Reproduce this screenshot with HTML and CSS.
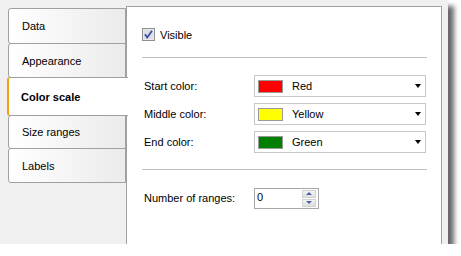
FILE: index.html
```html
<!DOCTYPE html>
<html>
<head>
<meta charset="utf-8">
<link rel="stylesheet" href="styles.css">
</head>
<body>
<div class="window">
  <div class="tabs">
    <div class="tab">Data</div>
    <div class="tab">Appearance</div>
    <div class="tab active">Color scale</div>
    <div class="tab">Size ranges</div>
    <div class="tab">Labels</div>
  </div>
  <div class="panel">
    <label class="check-row">
      <span class="checkbox">
        <svg width="13" height="13" viewBox="0 0 13 13">
          <rect x="0.5" y="0.5" width="12" height="12" fill="#f4f4f4" stroke="#8e8f8f"/>
          <rect x="1.5" y="1.5" width="10" height="10" fill="#dcdee2"/>
          <path d="M3 6.2 L5.2 9.5 L10 2.8" fill="none" stroke="#3b4fa8" stroke-width="1.8"/>
        </svg>
      </span>
      <span>Visible</span>
    </label>
    <div class="sep"></div>
    <div class="rows">
      <div class="row">
        <span class="lbl">Start color:</span>
        <div class="combo">
          <span class="swatch red"></span>
          <span class="ctext">Red</span>
          <span class="arrow"></span>
        </div>
      </div>
      <div class="row">
        <span class="lbl">Middle color:</span>
        <div class="combo">
          <span class="swatch yellow"></span>
          <span class="ctext">Yellow</span>
          <span class="arrow"></span>
        </div>
      </div>
      <div class="row">
        <span class="lbl">End color:</span>
        <div class="combo">
          <span class="swatch green"></span>
          <span class="ctext">Green</span>
          <span class="arrow"></span>
        </div>
      </div>
    </div>
    <div class="sep sep2"></div>
    <div class="row">
      <span class="lbl">Number of ranges:</span>
      <div class="spin">
        <span class="spin-val">0</span>
        <span class="spin-btns">
          <span class="sbtn"><span class="up"></span></span>
          <span class="sbtn"><span class="down"></span></span>
        </span>
      </div>
    </div>
  </div>
</div>
</body>
</html>
```
FILE: styles.css
```css
html, body {
  margin: 0;
  padding: 0;
  background: #ffffff;
}
body {
  font-family: "Liberation Sans", Arial, sans-serif;
  font-size: 11px;
  color: #000;
}
.window {
  width: 448px;
  height: 244px;
  background: #f0f0f0;
  display: flex;
  box-shadow: 6px 6px 5px rgba(0, 0, 0, 0.6);
}
.tabs {
  width: 118px;
  padding: 8px 0 0 8px;
  display: flex;
  flex-direction: column;
}
.tab {
  box-sizing: border-box;
  height: 35px;
  margin-top: -1px;
  border: 1px solid #a0a0a0;
  border-radius: 3px 0 0 3px;
  background: linear-gradient(to right, #ffffff, #ebebeb);
  display: flex;
  align-items: center;
  padding-left: 13px;
}
.tab:first-child {
  margin-top: 0;
  height: 36px;
}
.tab.active {
  position: relative;
  z-index: 2;
  height: 39px;
  margin-left: -1px;
  margin-right: -2px;
  border-left: 2px solid #f2a10d;
  border-right: none;
  background: #ffffff;
  font-weight: bold;
  padding-left: 12px;
}
.tab.active + .tab {
  height: 34px;
}
.panel {
  box-sizing: border-box;
  width: 316px;
  height: 238px;
  margin-top: 6px;
  background: #ffffff;
  border: 1px solid #a0a0a0;
  border-bottom: none;
  padding: 21px 14px 0 15px;
}
.check-row {
  display: flex;
  align-items: center;
  gap: 5px;
  height: 13px;
}
.checkbox {
  display: block;
  width: 13px;
  height: 13px;
}
.checkbox svg {
  display: block;
}
.sep {
  height: 1px;
  background: #c0c0c0;
  margin-top: 16px;
}
.rows {
  display: flex;
  flex-direction: column;
  gap: 6px;
  margin-top: 17px;
}
.sep2 {
  margin-top: 16px;
  margin-bottom: 17px;
}
.row {
  display: flex;
  align-items: center;
  height: 22px;
}
.lbl {
  width: 110px;
  padding-left: 2px;
}
.combo {
  box-sizing: border-box;
  width: 172px;
  height: 22px;
  border: 1px solid #c8c8c8;
  display: flex;
  align-items: center;
  padding-left: 3px;
}
.swatch {
  box-sizing: border-box;
  width: 25px;
  height: 13px;
  border: 1px solid #9a9a9a;
}
.red { background: #ff0000; }
.yellow { background: #ffff00; }
.green { background: #008000; }
.ctext {
  flex: 1;
  padding-left: 9px;
}
.arrow {
  width: 0;
  height: 0;
  border-left: 3.5px solid transparent;
  border-right: 3.5px solid transparent;
  border-top: 4px solid #000;
  margin-right: 4px;
}
.spin {
  box-sizing: border-box;
  width: 65px;
  height: 21px;
  border: 1px solid #a8a8a8;
  display: flex;
  padding: 1px 2px 1px 2px;
}
.spin-val {
  flex: 1;
  line-height: 15px;
}
.spin-btns {
  display: flex;
  flex-direction: column;
  gap: 1px;
  width: 14px;
}
.sbtn {
  flex: 1;
  background: linear-gradient(#f4f4f4, #dedede);
  border: 1px solid #d2d2d2;
  display: flex;
  align-items: center;
  justify-content: center;
}
.up {
  width: 0;
  height: 0;
  border-left: 3px solid transparent;
  border-right: 3px solid transparent;
  border-bottom: 3px solid #4d61a8;
}
.down {
  width: 0;
  height: 0;
  border-left: 3px solid transparent;
  border-right: 3px solid transparent;
  border-top: 3px solid #4d61a8;
}
```
